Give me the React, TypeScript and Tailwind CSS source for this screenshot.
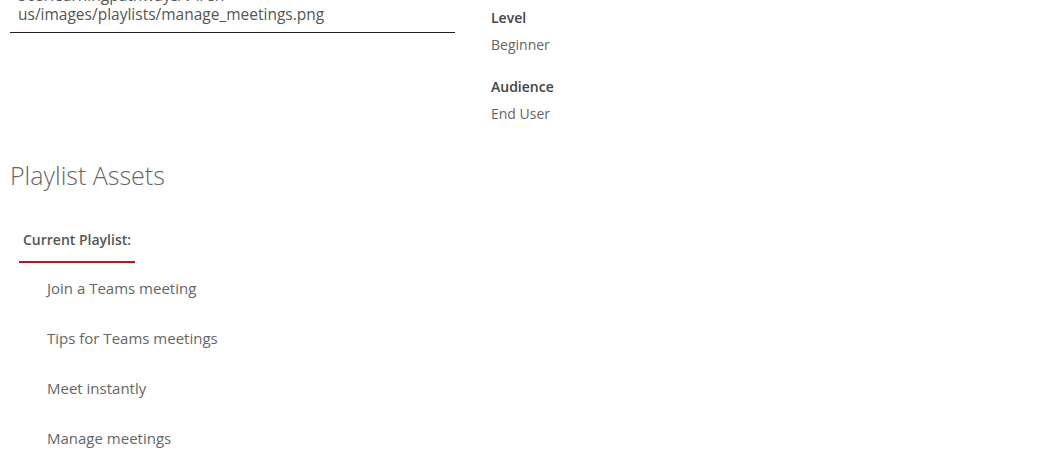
import React from "react";

const FONT = "font-['Segoe_UI','Open_Sans','Noto_Sans',sans-serif]";

const DETAILS = [
  { label: "Level", value: "Beginner" },
  { label: "Audience", value: "End User" },
];

const ASSETS = [
  "Join a Teams meeting",
  "Tips for Teams meetings",
  "Meet instantly",
  "Manage meetings",
];

export default function App() {
  return (
    <div className={`${FONT} h-[455px] w-[1052px] overflow-hidden bg-white`}>
      <div className="flex pl-[10px]">
        {/* Left column: image url field */}
        <div className="w-[445px]">
          <div className="-mt-[14px] border-b border-[#222] pb-[8px] pl-[8px] text-[15.5px] leading-[19px] text-[#555]">
            365/learningpathways/v4/en-
            <br />
            us/images/playlists/manage_meetings.png
          </div>
        </div>

        {/* Right column: details */}
        <div className="ml-[36px] pt-[8px]">
          {DETAILS.map((d) => (
            <div key={d.label} className="mb-[22px]">
              <div className="text-[14px] font-semibold leading-[20px] text-[#444]">
                {d.label}
              </div>
              <div className="mt-[7px] text-[14px] leading-[20px] text-[#666]">
                {d.value}
              </div>
            </div>
          ))}
        </div>
      </div>

      <div className="pl-[10px]">
        <h2 className="mt-[13px] text-[25px] font-light leading-[32px] text-[#666]">
          Playlist Assets
        </h2>

        <div className="mt-[36px] pl-[9px]">
          <div className="inline-block border-b-2 border-[#c50f1f] px-[4px] pb-[11px] text-[14px] font-semibold leading-[20px] text-[#555]">
            Current Playlist:
          </div>
        </div>

        <ul className="pl-[37px]">
          {ASSETS.map((a) => (
            <li key={a} className="flex h-[50px] items-center text-[15px] text-[#666]">
              {a}
            </li>
          ))}
        </ul>
      </div>
    </div>
  );
}
